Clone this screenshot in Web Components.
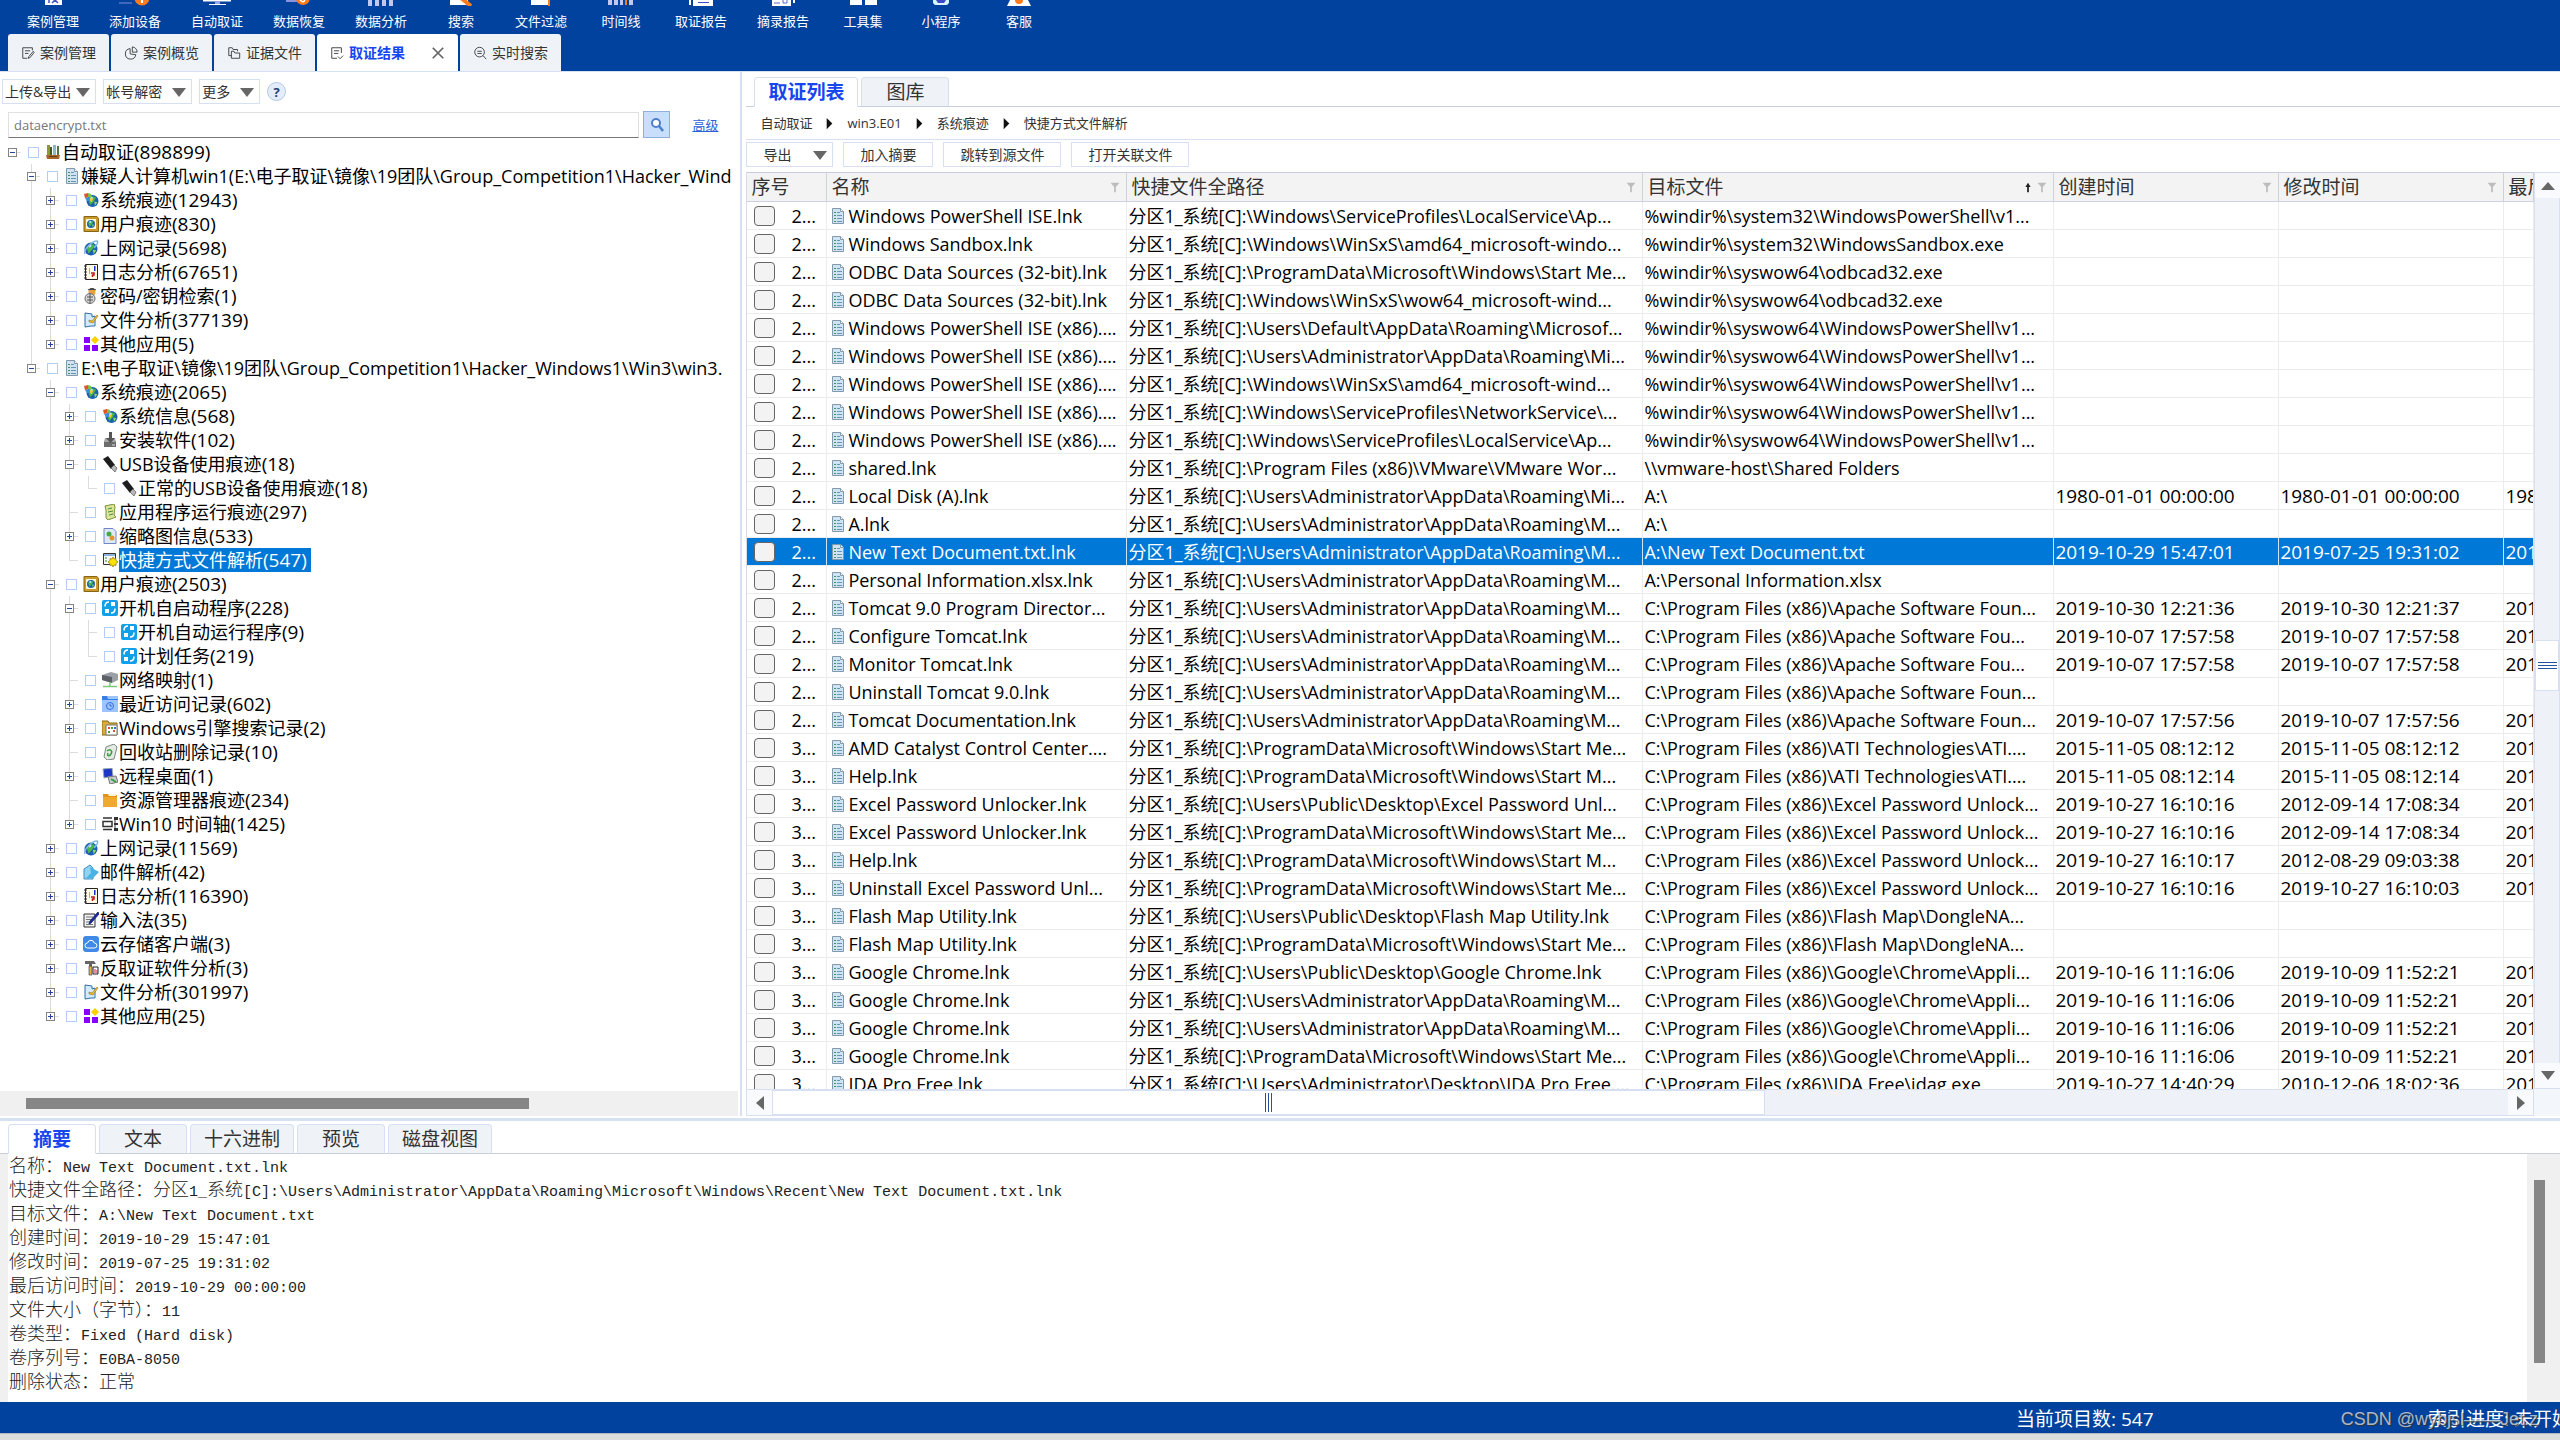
<!DOCTYPE html>
<html lang="zh-CN">
<head>
<meta charset="utf-8">
<title>取证结果</title>
<style>
  html, body { height: 100%; margin: 0; }
  body {
    background: #fff;
    color: #000;
    font-family: "Open Sans", "Noto Sans CJK SC", sans-serif;
    font-size: 14px;
    overflow: hidden;
  }
</style>
</head>
<body>
<forensic-app></forensic-app>

<script>
/**
 * Icon artwork, drawn in a 16x16 box.
 */
const globe = (x, y, r) => `
  <circle cx="${x}" cy="${y}" r="${r}" fill="#1d5fae"/>
  <path d="M${x - r * 0.7} ${y - r * 0.3}l${r * 0.6} ${-r * 0.5}l${r * 0.7} ${r * 0.2}l${-r * 0.4} ${r * 0.7}l${-r * 0.6} ${r * 0.6}z" fill="#49b748"/>
  <path d="M${x + r * 0.3} ${y + r * 0.1}l${r * 0.5} ${r * 0.1}l${-r * 0.4} ${r * 0.6}z" fill="#8be05a"/>
  <circle cx="${x - r * 0.2}" cy="${y - r * 0.5}" r="${r * 0.25}" fill="#bfe6ff"/>`;

const ICONS = {
  case: '<path d="M1 11h14l-1 4H2z" fill="#a8642a"/><path d="M2 1h3v10H2z" fill="#8a9a2c"/><path d="M5 3h2v8H5z" fill="#3f5a28"/><path d="M8 1l3 0 0 10H8z" fill="#8fb6c9"/><path d="M12 2h2v9h-2z" fill="#4d7a3d"/><path d="M4 12h8v1H4z" fill="#6d3b12"/>',
  doc: '<path d="M2.500 .5h8l3 3v12h-11z" fill="#cfe3f3" stroke="#8199ad"/><path d="M10.500 .5v3h3" fill="#fff" stroke="#8199ad"/><path d="M4 4.500h2M4 7.500h2M4 10.500h2M4 13.500h2" stroke="#3a9a5a"/><path d="M7 4.500h3M7 7.500h5M7 10.500h5M7 13.500h5" stroke="#6c93b8"/>',
  sys: globe(9.5, 9, 6) + '<path d="M1 2l4-1 1 4-4 1z" fill="#e8502c"/><path d="M5 1l3 1 0 4-3-1z" fill="#7cc242"/><path d="M2 6l4-1 2 4-4 0z" fill="#3c8ee0"/><path d="M7 6l3 1-1 3-2-1z" fill="#f7c62e"/>',
  user: '<path d="M1 .5h13l1.500 2v13H1z" fill="#c99a2c" stroke="#8a6410"/><path d="M3 3h10v10H3z" fill="#fff8d8"/>' + globe(8, 8, 4),
  globe: globe(8, 9, 6.5) + '<path d="M2 14C0 10 9 1 14 1c2 1-1 5-3 7" fill="none" stroke="#7fb9e8" stroke-width="1.500"/>',
  log: '<path d="M2.500 .5h12v15h-12z" fill="#fffbe6" stroke="#222"/><path d="M1 2h3M1 5h3M1 8h3M1 11h3M1 14h3" stroke="#333"/><path d="M6 4h1v6H6z" fill="#d8b400"/><path d="M11 2h1.500v5H11z" fill="#1430d0"/><path d="M8 9h3v2H9.500v2" fill="none" stroke="#c01818" stroke-width="1.500"/>',
  key: '<circle cx="9" cy="4" r="3.500" fill="#e8a13c"/><path d="M5 2l4-2 4 2" fill="#444" stroke="#444"/><circle cx="7" cy="10.500" r="5" fill="#d8d8d8" stroke="#666"/><path d="M4 9h6M4 12h6M7 6v9" stroke="#555"/>',
  file: '<path d="M2 1l7 1v3l3-1v10H8l-6 1z" fill="#d4ebfb" stroke="#2f6ea8"/><path d="M6 8l3 1 5-6 1 1-5 7-4-1z" fill="#f1c232" stroke="#7c5a10" stroke-width=".5"/>',
  apps: '<path d="M1 1h6v6H1zM1 9h6v6H1zM9 9h6v6H9z" fill="#8a00ff"/><path d="M12 0l4 4-4 4-4-4z" fill="#ffd000"/>',
  install: '<path d="M2 9h12v6H2z" fill="#6d6d6d"/><path d="M3 6h10l1 4H2z" fill="#a6a6a6"/><path d="M7 0h3v6h3l-4.500 5L4 6h3z" fill="#555"/><path d="M10 13h3" stroke="#ddd"/>',
  usb: '<path d="M1 3l5-3 7 9-4 4z" fill="#1e1e1e"/><path d="M9 12l3-3 3 3-2 4z" fill="#b9b9b9" stroke="#555" stroke-width=".7"/>',
  paper: '<path d="M3 2l9-2 1 3-1 8 2 2-8 3-2-2V6z" fill="#d9e59a" stroke="#7f9038"/><path d="M6 5l4-1M6 8l5-1M7 11l4-1" stroke="#4f8a3a"/>',
  thumb: '<path d="M2 .5h9l3 3v12H2z" fill="#dfe9fb" stroke="#6f86c0"/><circle cx="7" cy="6" r="2.500" fill="#45a845"/><circle cx="10" cy="10" r="2.500" fill="#e0962c"/>',
  link: '<path d="M1.500 1.500h12v11h-12z" fill="#f7f7f7" stroke="#333"/><path d="M2 2h11v2H2z" fill="#8fb4d9"/><path d="M3 6h2M3 9h2" stroke="#2c8c3c"/><path d="M11 5l1 2 2-.5v2l2 1.500-2 1.500v2l-2-.5-1 2-1-2-2 .5v-2L6 10l2-1.500v-2l2 .5z" fill="#ffe100" stroke="#8a7a00" stroke-width=".7"/>',
  start: '<rect width="16" height="16" rx="2" fill="#14a0e8"/><path d="M9 2h4v4H9zM3 9h4v4H3z" fill="#fff"/><path d="M7 2C4 2 3 4 3 6.500M9 13c3 0 4-2 4-4.500" fill="none" stroke="#fff" stroke-width="1.500"/>',
  net: '<path d="M0 3l9-3 7 2v6l-6 3-10-3z" fill="#9aa0a6"/><path d="M0 3l10 2v6L0 8z" fill="#5c6168"/><path d="M8 10v4M1 14.500h14" stroke="#7dc87d" stroke-width="1.500"/>',
  recent: '<path d="M0 0h16v16H0z" fill="#9dc4ff"/><path d="M0 0h5l1 3h10v1H0z" fill="#3a7de8"/><circle cx="8" cy="10" r="3.500" fill="none" stroke="#2f6fe0"/><path d="M8 8v2h2" fill="none" stroke="#2f6fe0"/>',
  winsearch: '<path d="M0 1h6l1 2h8v12H0z" fill="#d8ad3c" stroke="#8a6a18"/><path d="M4 5h11v10H4z" fill="#fff" stroke="#777"/><path d="M6 7h2v2H6zM11 10h2v2h-2z" fill="#e0502c"/><path d="M9 7h2v2H9zM6 11h2v2H6z" fill="#4a9a3a"/><path d="M12 7h2v2h-2z" fill="#2c6ee0"/>',
  bin: '<path d="M4 3l8-3 3 3-3 12-7 1-3-3z" fill="#e3ebe3" stroke="#7c8a80"/><path d="M5 7c3-3 6 0 4 3s-4 2-3-1" fill="none" stroke="#3f9e46" stroke-width="1.500"/>',
  remote: '<path d="M1 1l9-1 1 8-9 2z" fill="#1c36c8" stroke="#9aa"/><path d="M6 9l8-1 2 6-8 2z" fill="#c6cbd2" stroke="#777"/><path d="M9 11l5 3" stroke="#3aa03a" stroke-width="2"/>',
  folder: '<path d="M1 2h5l1 1h8v12H1z" fill="#e0951a"/><path d="M1 5h14v10H1z" fill="#efa92e"/><path d="M6 2h8v2H7z" fill="#fff3d0"/>',
  timeline: '<path d="M1 2h9M1 13.500h9M1 5.500h9v5H1z" fill="none" stroke="#333" stroke-width="1.500"/><path d="M13 1v14" stroke="#333"/><path d="M12 1h4v3h-4zM12 7h4v2h-4zM12 12h4v3h-4z" fill="#333"/>',
  mail: '<path d="M1 5l6-4 3 3v11H1z" fill="#8fd4f4" stroke="#3a8fc0"/><path d="M7 3l9 5-6 6H3l5-5z" fill="#49b3e6"/>',
  ime: '<path d="M1 2h11v13H1z" fill="#f0f0f0" stroke="#333"/><path d="M3 5h7M3 7.500h6M3 10h4M3 12.500h7" stroke="#777"/><path d="M15 0l1 2-8 9-2 1 1-3z" fill="#1c2c8c" stroke="#1c2c8c"/>',
  cloud: '<rect width="16" height="16" rx="3" fill="#3f8ae6"/><path d="M4.500 12a2.500 2.500 0 0 1 0-5 3.500 3.500 0 0 1 6.800 0 2.500 2.500 0 0 1 .2 5z" fill="none" stroke="#fff"/>',
  tool: '<path d="M2 1h9l2 3H9v2H6V4H2z" fill="#666"/><path d="M6 6h3v9H6z" fill="#e0b040" stroke="#333" stroke-width=".6"/><path d="M10 7h5v7h-5z" fill="#fff" stroke="#222"/><path d="M12 9v4M14 10v3" stroke="#c81840"/>',

  edit: '<path d="M13 5V2H2v12h5M4.500 5.500h6M4.500 8.500h4M14 6l-5 6-1 2 2-.5 5-6z" fill="none" stroke="#333"/>',
  pie: '<path d="M7 3a6 6 0 1 0 6.500 7L7 9zM9.500 1v6H15A6 6 0 0 0 9.500 1z" fill="none" stroke="#333"/>',
  copy: '<path d="M5 11H2V2h4l1 2h5v2M5 6h3l1 2h5.500v6H5z" fill="none" stroke="#333"/>',
  check: '<path d="M13 8V2H2v12h6M4.500 5.500h6M4.500 8.500h5M9 12l2.500 2.500L15 11" fill="none" stroke="#333"/>',
  find: '<circle cx="7.500" cy="7" r="5.500" fill="none" stroke="#333"/><path d="M5 6h5M5 8.500h5M11.500 11l3.500 4" stroke="#333" fill="none"/>',
  glass: '<circle cx="7" cy="6" r="4" fill="#fff" stroke="#4f7fc8" stroke-width="2"/><path d="M10 9l4 5" stroke="#4f7fc8" stroke-width="2.500"/>',
  close: '<path d="M2 2l12 12M14 2l-12 12" stroke="#666" stroke-width="2"/>',
  down: '<path d="M1 4h14l-7 9z" fill="#666"/>',
  up: '<path d="M1 12h14L8 4z" fill="#666"/>',
  left: '<path d="M12 1v14L4 8z" fill="#666"/>',
  right: '<path d="M4 1v14l8-7z" fill="#666"/>',
  crumb: '<path d="M5 2v12l6-6z" fill="#111"/>',
  filter: '<path d="M3 3h10l-4 5v6H7V8z" fill="#bdbdbd"/>',
  sort: '<path d="M8 3l3 5H9v6H7V8H5z" fill="#222"/>'
};

/* Lower edges of the ribbon pictures, 32x6 */
const RIBBON_ART = {
  case: '<path d="M0 0h17v5H0z" fill="#fff" transform="translate(8)"/><path d="M12 0v3M15 3l3-3 3 3" stroke="#3d4fc4" stroke-width="1.500" fill="none"/>',
  add: '<path d="M0 3h13" stroke="#7f8fd8"/><circle cx="23" cy="-2" r="7.500" fill="#ff7a1a"/><path d="M23 0v3" stroke="#fff" stroke-width="2"/>',
  auto: '<path d="M2 0h28v1.500H2z" fill="#fff"/><path d="M8 4.500h17" stroke="#fff"/><path d="M14 1h5v3h-5z" fill="#9aa6e8"/>',
  restore: '<path d="M3 0h12v2H3z" fill="#8a95dc"/><circle cx="20" cy="-2" r="7" fill="#ff7a1a"/><path d="M17 0q4 4 5-1" fill="none" stroke="#fff" stroke-width="1.500"/>',
  chart: '<path d="M3 0h4v6H3zM10 0h4v6h-4zM17 0h4v6h-4zM24 0h4v6h-4z" fill="#c3c7ef"/>',
  search: '<path d="M5 0h18v5H5z" fill="#fff"/><path d="M16-2l10 8" stroke="#ff7a1a" stroke-width="4"/>',
  filter: '<path d="M6 0h18v5H6z" fill="#fff"/><path d="M23 0h2v6h-2z" fill="#ff7a1a"/>',
  time: '<path d="M3 0h4v5H3zM9 0h4v5H9zM15 0h3v5h-3zM24 0h4v5h-4z" fill="#c3c7ef"/><path d="M20 0h2v5h-2z" fill="#ff7a1a"/>',
  report: '<path d="M4 0h2v5H4zM8 0h20v6H8z" fill="#fff"/><path d="M13 2.500h11" stroke="#3d4fc4"/>',
  excerpt: '<path d="M5 0h19v6H5z" fill="#fff"/><path d="M7 3h6M16 0v3h4V0" stroke="#5a68cc" fill="none"/><path d="M27 0v3" stroke="#fff" stroke-width="2"/>',
  tools: '<path d="M3 0h12v5H3zM18 0h12v5H18z" fill="#fff"/>',
  mini: '<path d="M8 0h16v3l-2 2H10l-2-2z" fill="#d6f3ff"/><path d="M11 0h10l-2 3h-6z" fill="#3b48c8"/>',
  service: '<path d="M7 0h18l3 6H4z" fill="#fff"/><circle cx="16" cy="0" r="4" fill="#ff7a1a"/>'
};

/** Base class: opens a shadow root and fills it once connected */
class BaseElement extends HTMLElement {
  constructor() {
    super();
    this.attachShadow({ mode: 'open' });
  }

  connectedCallback() {
    this.shadowRoot.innerHTML = `<style>* { box-sizing: border-box; } ${this.styles()}</style>${this.markup()}`;
  }
}

/** <ui-icon name="doc"></ui-icon> */
class UiIcon extends BaseElement {
  styles() {
    return ':host { display: block; flex: none; width: 16px; height: 16px; } svg { display: block; width: 100%; height: 100%; }';
  }

  markup() {
    return `<svg viewBox="0 0 16 16" aria-hidden="true">${ICONS[this.getAttribute('name')] || ''}</svg>`;
  }
}

/** Top ribbon with the large tool buttons */
class AppRibbon extends BaseElement {
  styles() {
    return `
      :host { display: block; }
      nav { display: flex; gap: 30px; padding: 0 27px 4px; }
      button {
        display: flex; flex-direction: column; align-items: center; gap: 6px;
        min-width: 48px; padding: 0; border: 0; background: none;
        color: #fff; font: 13px/18px "Open Sans", "Noto Sans CJK SC", sans-serif; white-space: nowrap;
      }
      svg { display: block; width: 32px; height: 6px; overflow: hidden; }`;
  }

  markup() {
    const items = [
      ['case', '案例管理'], ['add', '添加设备'], ['auto', '自动取证'], ['restore', '数据恢复'],
      ['chart', '数据分析'], ['search', '搜索'], ['filter', '文件过滤'], ['time', '时间线'],
      ['report', '取证报告'], ['excerpt', '摘录报告'], ['tools', '工具集'], ['mini', '小程序'], ['service', '客服']
    ];
    return `<nav>${items.map(([art, text]) => `
      <button><svg viewBox="0 0 32 6" aria-hidden="true">${RIBBON_ART[art]}</svg>${text}</button>`).join('')}</nav>`;
  }
}

/** One document tab; the label is slotted */
class DocTab extends BaseElement {
  styles() {
    return `
      :host { display: block; }
      .tab {
        display: flex; align-items: center; height: 37px; padding: 0 13px;
        background: #eff3f8; border-radius: 3px 3px 0 0;
      }
      button {
        display: flex; align-items: center; gap: 5px; padding: 0; border: 0; background: none;
        color: #333; font: 14px/20px "Open Sans", "Noto Sans CJK SC", sans-serif;
      }
      button ui-icon { width: 14px; height: 14px; }
      .close { margin-left: 26px; }
      :host([active]) .tab { background: #fff; }
      :host([active]) .label { color: #1745ee; font-weight: 700; }`;
  }

  markup() {
    const close = this.hasAttribute('active')
      ? '<button class="close" aria-label="关闭"><ui-icon name="close"></ui-icon></button>' : '';
    return `<div class="tab"><button class="label"><ui-icon name="${this.getAttribute('icon')}"></ui-icon><slot></slot></button>${close}</div>`;
  }
}

/** Row of page tabs with a rule beneath, used over the list and the details */
class PageTabs extends BaseElement {
  styles() {
    return `
      :host { display: block; }
      div { display: flex; gap: 3px; padding: 0 8px; border-bottom: 1px solid #c9cede; }
      button {
        height: 30px; min-width: 88px; margin-bottom: -1px; padding: 0 13px;
        border: 1px solid #d6e0f2; border-bottom-color: #c9cede; border-radius: 4px 4px 0 0;
        background: #eff3f8; color: #333;
        font: 19px/26px "Open Sans", "Noto Sans CJK SC", sans-serif;
      }
      button[aria-selected="true"] { background: #fff; border-bottom-color: #fff; color: #1745ee; font-weight: 700; }`;
  }

  markup() {
    return `<div role="tablist">${this.getAttribute('items').split(',').map((t, i) =>
      `<button role="tab" aria-selected="${i === 0}">${t}</button>`).join('')}</div>`;
  }
}

/** Bordered tool button, with an optional drop arrow */
class ToolButton extends BaseElement {
  styles() {
    return `
      :host { display: block; }
      button {
        display: flex; align-items: center; justify-content: space-between; width: 100%; height: 25px;
        padding: 0 var(--pad, 15px); border: 1px solid #d6e0f2; background: #fff;
        color: #333; font: 14px/20px "Open Sans", "Noto Sans CJK SC", sans-serif; white-space: nowrap;
      }
      ui-icon { margin-left: var(--arrow-gap, 4px); }
      :host([menu]) button { padding-right: 4px; }`;
  }

  markup() {
    return `<button><slot></slot>${this.hasAttribute('menu') ? '<ui-icon name="down"></ui-icon>' : ''}</button>`;
  }
}

/* level, expander (+, - or none), icon, label, count, selected */
const TREE = [
  [0, '-', 'case', '自动取证', 898899],
  [1, '-', 'doc', '嫌疑人计算机win1(E:\\电子取证\\镜像\\19团队\\Group_Competition1\\Hacker_Wind'],
  [2, '+', 'sys', '系统痕迹', 12943],
  [2, '+', 'user', '用户痕迹', 830],
  [2, '+', 'globe', '上网记录', 5698],
  [2, '+', 'log', '日志分析', 67651],
  [2, '+', 'key', '密码/密钥检索', 1],
  [2, '+', 'file', '文件分析', 377139],
  [2, '+', 'apps', '其他应用', 5],
  [1, '-', 'doc', 'E:\\电子取证\\镜像\\19团队\\Group_Competition1\\Hacker_Windows1\\Win3\\win3.'],
  [2, '-', 'sys', '系统痕迹', 2065],
  [3, '+', 'sys', '系统信息', 568],
  [3, '+', 'install', '安装软件', 102],
  [3, '-', 'usb', 'USB设备使用痕迹', 18],
  [4, '', 'usb', '正常的USB设备使用痕迹', 18],
  [3, '', 'paper', '应用程序运行痕迹', 297],
  [3, '+', 'thumb', '缩略图信息', 533],
  [3, '', 'link', '快捷方式文件解析', 547, true],
  [2, '-', 'user', '用户痕迹', 2503],
  [3, '-', 'start', '开机自启动程序', 228],
  [4, '', 'start', '开机自动运行程序', 9],
  [4, '', 'start', '计划任务', 219],
  [3, '', 'net', '网络映射', 1],
  [3, '+', 'recent', '最近访问记录', 602],
  [3, '+', 'winsearch', 'Windows引擎搜索记录', 2],
  [3, '', 'bin', '回收站删除记录', 10],
  [3, '+', 'remote', '远程桌面', 1],
  [3, '', 'folder', '资源管理器痕迹', 234],
  [3, '+', 'timeline', 'Win10 时间轴', 1425],
  [2, '+', 'globe', '上网记录', 11569],
  [2, '+', 'mail', '邮件解析', 42],
  [2, '+', 'log', '日志分析', 116390],
  [2, '+', 'ime', '输入法', 35],
  [2, '+', 'cloud', '云存储客户端', 3],
  [2, '+', 'tool', '反取证软件分析', 3],
  [2, '+', 'file', '文件分析', 301997],
  [2, '+', 'apps', '其他应用', 25]
];

class EvidenceTree extends BaseElement {
  styles() {
    return `
      :host { display: block; flex: 1; min-height: 0; overflow: hidden; }
      ul { margin: 0; padding: 0 0 0 3px; list-style: none; }
      li { display: flex; align-items: center; height: 24px; white-space: nowrap; }
      .guide { display: flex; flex: none; align-items: center; justify-content: center; width: 19px; height: 24px; }
      .line { background: linear-gradient(#dcdcdc, #dcdcdc) 9px 0 / 1px 100% no-repeat; }
      .tee { background:
        linear-gradient(#dcdcdc, #dcdcdc) 9px 0 / 1px 100% no-repeat,
        linear-gradient(#dcdcdc, #dcdcdc) 9px 12px / 9px 1px no-repeat; }
      .end { background:
        linear-gradient(#dcdcdc, #dcdcdc) 9px 0 / 1px 12px no-repeat,
        linear-gradient(#dcdcdc, #dcdcdc) 9px 12px / 9px 1px no-repeat; }
      .root { background: linear-gradient(#dcdcdc, #dcdcdc) 9px 12px / 9px 1px no-repeat; }
      .guide button { display: block; width: 9px; height: 9px; padding: 0; border: 1px solid #848484; background: #fff; }
      .guide svg { display: block; width: 7px; height: 7px; }
      input {
        appearance: none; flex: none; width: 11px; height: 11px; margin: 0 6px;
        border: 1px solid #b4ccf8; background: #fff;
      }
      label { display: flex; align-items: center; gap: 1px; font-size: 18px; line-height: 24px; }
      .count { font-size: 19px; }
      .selected .text { background: #0078d7; color: #fff; padding-right: 4px; }`;
  }

  /** True when the branch at the given level goes on below row i */
  continues(i, level) {
    for (let j = i + 1; j < TREE.length; j++) {
      if (TREE[j][0] < level) return false;
      if (TREE[j][0] === level) return true;
    }
    return false;
  }

  markup() {
    const rows = TREE.map(([level, toggle, icon, text, count, selected], i) => {
      let guides = '';
      for (let l = 0; l < level; l++) {
        guides += `<span class="guide ${l > 0 && this.continues(i, l) ? 'line' : ''}"></span>`;
      }
      const kind = level === 0 ? 'root' : this.continues(i, level) ? 'tee' : 'end';
      const button = toggle ? `<button aria-label="${toggle === '+' ? '展开' : '折叠'}"><svg viewBox="0 0 7 7">
        <path d="M1 3.500h5${toggle === '+' ? 'M3.500 1v5' : ''}" stroke="#24479c"/></svg></button>` : '';
      return `<li role="treeitem" class="${selected ? 'selected' : ''}">${guides}<span class="guide ${kind}">${button}</span>
        <input type="checkbox" id="n${i}"><label for="n${i}"><ui-icon name="${icon}"></ui-icon><span class="text">${text}${
          count ? `<span class="count">(${count})</span>` : ''}</span></label></li>`;
    });
    return `<ul role="tree">${rows.join('')}</ul>`;
  }
}

/**
 * Plain grey scrollbar.
 * The track attribute holds the shares before, in and after the thumb.
 */
class FlatScroll extends BaseElement {
  styles() {
    const [a, b, c] = this.getAttribute('track').split(' ');
    return `
      :host { display: flex; flex: none; background: #f0f0f0; }
      :host([vertical]) { flex-direction: column; width: 33px; padding: 0 15px 0 7px; }
      :host(:not([vertical])) { height: 25px; padding: 7px 0; }
      .before { flex: ${a}; } .thumb { flex: ${b}; background: #868686; } .after { flex: ${c}; }`;
  }

  markup() {
    return '<span class="before"></span><span class="thumb"></span><span class="after"></span>';
  }
}

/** Scrollbar of the grid, with arrow buttons and a gripped thumb */
class GridScroll extends BaseElement {
  styles() {
    const [a, b, c] = this.getAttribute('track').split(' ');
    return `
      :host { display: flex; background: #eef1f7; border: 1px solid #d6e0f2; }
      :host([vertical]) { flex-direction: column; width: 26px; }
      :host(:not([vertical])) { height: 27px; }
      button { display: grid; place-items: center; flex: none; width: 25px; height: 25px; padding: 0; border: 0; background: #f8fafd; }
      .before { flex: ${a}; } .after { flex: ${c}; }
      .thumb { display: grid; place-items: center; flex: ${b}; background: #fff; border: 1px solid #d6e0f2; }
      .grip { width: 7px; height: 19px; border: solid #24529c; border-width: 0 1px; background: linear-gradient(#24529c, #24529c) 2px 0 / 1px 100% no-repeat; }
      :host([vertical]) .grip { width: 19px; height: 7px; border-width: 1px 0; background: linear-gradient(#24529c, #24529c) 0 2px / 100% 1px no-repeat; }`;
  }

  markup() {
    const v = this.hasAttribute('vertical');
    return `<button aria-label="向前"><ui-icon name="${v ? 'up' : 'left'}"></ui-icon></button>
      <span class="before"></span><span class="thumb"><span class="grip"></span></span><span class="after"></span>
      <button aria-label="向后"><ui-icon name="${v ? 'down' : 'right'}"></ui-icon></button>`;
  }
}

const C = '分区1_系统[C]:';
const ROAM = C + '\\Users\\Administrator\\AppData\\Roaming\\M...';
const ROAM_I = C + '\\Users\\Administrator\\AppData\\Roaming\\Mi...';
const START = C + '\\ProgramData\\Microsoft\\Windows\\Start Me...';
const START_M = C + '\\ProgramData\\Microsoft\\Windows\\Start M...';
const PF = 'C:\\Program Files (x86)\\';
const WOW = '%windir%\\syswow64\\';

/* no, name, shortcut path, target, created, modified, accessed */
const ROWS = [
  [2, 'Windows PowerShell ISE.lnk', C + '\\Windows\\ServiceProfiles\\LocalService\\Ap...', '%windir%\\system32\\WindowsPowerShell\\v1...'],
  [2, 'Windows Sandbox.lnk', C + '\\Windows\\WinSxS\\amd64_microsoft-windo...', '%windir%\\system32\\WindowsSandbox.exe'],
  [2, 'ODBC Data Sources (32-bit).lnk', START, WOW + 'odbcad32.exe'],
  [2, 'ODBC Data Sources (32-bit).lnk', C + '\\Windows\\WinSxS\\wow64_microsoft-wind...', WOW + 'odbcad32.exe'],
  [2, 'Windows PowerShell ISE (x86)....', C + '\\Users\\Default\\AppData\\Roaming\\Microsof...', WOW + 'WindowsPowerShell\\v1...'],
  [2, 'Windows PowerShell ISE (x86)....', ROAM_I, WOW + 'WindowsPowerShell\\v1...'],
  [2, 'Windows PowerShell ISE (x86)....', C + '\\Windows\\WinSxS\\amd64_microsoft-wind...', WOW + 'WindowsPowerShell\\v1...'],
  [2, 'Windows PowerShell ISE (x86)....', C + '\\Windows\\ServiceProfiles\\NetworkService\\...', WOW + 'WindowsPowerShell\\v1...'],
  [2, 'Windows PowerShell ISE (x86)....', C + '\\Windows\\ServiceProfiles\\LocalService\\Ap...', WOW + 'WindowsPowerShell\\v1...'],
  [2, 'shared.lnk', C + '\\Program Files (x86)\\VMware\\VMware Wor...', '\\\\vmware-host\\Shared Folders'],
  [2, 'Local Disk (A).lnk', ROAM_I, 'A:\\', '1980-01-01 00:00:00', '1980-01-01 00:00:00', '1980-01-01'],
  [2, 'A.lnk', ROAM, 'A:\\'],
  [2, 'New Text Document.txt.lnk', ROAM, 'A:\\New Text Document.txt', '2019-10-29 15:47:01', '2019-07-25 19:31:02', '2019-10-29'],
  [2, 'Personal Information.xlsx.lnk', ROAM, 'A:\\Personal Information.xlsx'],
  [2, 'Tomcat 9.0 Program Director...', ROAM, PF + 'Apache Software Foun...', '2019-10-30 12:21:36', '2019-10-30 12:21:37', '2019-10-30'],
  [2, 'Configure Tomcat.lnk', ROAM, PF + 'Apache Software Fou...', '2019-10-07 17:57:58', '2019-10-07 17:57:58', '2019-10-07'],
  [2, 'Monitor Tomcat.lnk', ROAM, PF + 'Apache Software Fou...', '2019-10-07 17:57:58', '2019-10-07 17:57:58', '2019-10-07'],
  [2, 'Uninstall Tomcat 9.0.lnk', ROAM, PF + 'Apache Software Foun...'],
  [2, 'Tomcat Documentation.lnk', ROAM, PF + 'Apache Software Foun...', '2019-10-07 17:57:56', '2019-10-07 17:57:56', '2019-10-07'],
  [3, 'AMD Catalyst Control Center....', START, PF + 'ATI Technologies\\ATI....', '2015-11-05 08:12:12', '2015-11-05 08:12:12', '2015-11-05'],
  [3, 'Help.lnk', START_M, PF + 'ATI Technologies\\ATI....', '2015-11-05 08:12:14', '2015-11-05 08:12:14', '2015-11-05'],
  [3, 'Excel Password Unlocker.lnk', C + '\\Users\\Public\\Desktop\\Excel Password Unl...', PF + 'Excel Password Unlock...', '2019-10-27 16:10:16', '2012-09-14 17:08:34', '2019-10-27'],
  [3, 'Excel Password Unlocker.lnk', START, PF + 'Excel Password Unlock...', '2019-10-27 16:10:16', '2012-09-14 17:08:34', '2019-10-27'],
  [3, 'Help.lnk', START_M, PF + 'Excel Password Unlock...', '2019-10-27 16:10:17', '2012-08-29 09:03:38', '2019-10-27'],
  [3, 'Uninstall Excel Password Unl...', START, PF + 'Excel Password Unlock...', '2019-10-27 16:10:16', '2019-10-27 16:10:03', '2019-10-27'],
  [3, 'Flash Map Utility.lnk', C + '\\Users\\Public\\Desktop\\Flash Map Utility.lnk', PF + 'Flash Map\\DongleNA...'],
  [3, 'Flash Map Utility.lnk', START, PF + 'Flash Map\\DongleNA...'],
  [3, 'Google Chrome.lnk', C + '\\Users\\Public\\Desktop\\Google Chrome.lnk', PF + 'Google\\Chrome\\Appli...', '2019-10-16 11:16:06', '2019-10-09 11:52:21', '2019-10-16'],
  [3, 'Google Chrome.lnk', ROAM, PF + 'Google\\Chrome\\Appli...', '2019-10-16 11:16:06', '2019-10-09 11:52:21', '2019-10-16'],
  [3, 'Google Chrome.lnk', ROAM, PF + 'Google\\Chrome\\Appli...', '2019-10-16 11:16:06', '2019-10-09 11:52:21', '2019-10-16'],
  [3, 'Google Chrome.lnk', START, PF + 'Google\\Chrome\\Appli...', '2019-10-16 11:16:06', '2019-10-09 11:52:21', '2019-10-16'],
  [3, 'IDA Pro Free.lnk', C + '\\Users\\Administrator\\Desktop\\IDA Pro Free....', PF + 'IDA Free\\idag.exe', '2019-10-27 14:40:29', '2010-12-06 18:02:36', '2019-10-27']
];
const SELECTED_ROW = 12;

class ResultGrid extends BaseElement {
  styles() {
    return `
      :host { display: grid; grid-template: minmax(0, 1fr) auto / minmax(0, 1fr) auto; flex: 1; min-height: 0; }
      .view { overflow: hidden; border-left: 1px solid #d6dbe6; }
      .corner { background: #f3f6fb; }
      table { width: 100%; table-layout: fixed; border-collapse: separate; border-spacing: 0; }
      th, td { padding: 0 0 0 1px; overflow: hidden; border-right: 1px solid #ececec; border-bottom: 1px solid #ececec; text-align: left; white-space: nowrap; }
      th {
        height: 30px; padding: 0 4px; background: #f3f3f3; border-color: #cdd1de; border-top: 1px solid #c9cede;
        color: #333; font-size: 19px; font-weight: 400; line-height: 26px;
      }
      .head { display: flex; align-items: center; }
      .head span { flex: 1; }
      .head ui-icon { width: 14px; height: 14px; }
      td { height: 28px; font-size: 18px; line-height: 24px; }
      .date { font-size: 19px; }
      .cell { display: flex; align-items: center; gap: 2px; }
      .no { padding-left: 7px; }
      .no .cell { gap: 16px; }
      .name { padding-left: 3px; }
      input {
        appearance: none; flex: none; width: 21px; height: 20px; margin: 0;
        border: 1px solid #666; border-radius: 4px; background: #f3f3f3;
      }
      .selected td { background: #0078d7; color: #fff; border-right-color: #cfe4f7; }`;
  }

  markup() {
    const cols = [
      ['序号', 80, ''], ['名称', 300, 'f'], ['快捷文件全路径', 516, 'f'], ['目标文件', 411, 'sf'],
      ['创建时间', 225, 'f'], ['修改时间', 225, 'f'], ['最后访问时间', 0, '']
    ];
    const heads = cols.map(([text, , marks]) => `<th scope="col"><div class="head"><span>${text}</span>${
      marks.includes('s') ? '<ui-icon name="sort"></ui-icon>' : ''}${
      marks.includes('f') ? '<ui-icon name="filter"></ui-icon>' : ''}</div></th>`).join('');
    const rows = ROWS.map(([no, name, path, target, made = '', changed = '', seen = ''], i) => `
      <tr class="${i === SELECTED_ROW ? 'selected' : ''}">
        <td class="no"><div class="cell"><input type="checkbox" id="r${i}"><label for="r${i}">${no}...</label></div></td>
        <td class="name"><div class="cell"><ui-icon name="doc"></ui-icon>${name}</div></td>
        <td>${path}</td><td>${target}</td>
        <td class="date">${made}</td><td class="date">${changed}</td><td class="date">${seen}</td>
      </tr>`).join('');
    return `
      <div class="view"><table>
        <colgroup>${cols.map(c => c[1] ? `<col style="width: ${c[1]}px">` : '<col>').join('')}</colgroup>
        <thead><tr>${heads}</tr></thead><tbody>${rows}</tbody>
      </table></div>
      <grid-scroll vertical track="443 49 372"></grid-scroll>
      <grid-scroll track="0 992 744"></grid-scroll>
      <div class="corner"></div>`;
  }
}

/** Summary of the selected shortcut */
class DetailPane extends BaseElement {
  styles() {
    return `
      :host { display: flex; }
      .text {
        flex: 1; min-width: 0; padding: 0 0 8px 1px; border-left: 8px solid #f0f0f0;
        font-family: "Liberation Mono", "Noto Sans CJK SC", monospace; font-size: 15px;
      }
      p { height: 24px; margin: 0; color: #222; line-height: 21px; white-space: pre; }
      .cn { font-family: "Noto Sans CJK SC", sans-serif; font-size: 18px; font-weight: 300; }`;
  }

  markup() {
    const lines = [
      '名称：New Text Document.txt.lnk',
      '快捷文件全路径：分区1_系统[C]:\\Users\\Administrator\\AppData\\Roaming\\Microsoft\\Windows\\Recent\\New Text Document.txt.lnk',
      '目标文件：A:\\New Text Document.txt',
      '创建时间：2019-10-29 15:47:01',
      '修改时间：2019-07-25 19:31:02',
      '最后访问时间：2019-10-29 00:00:00',
      '文件大小（字节）：11',
      '卷类型：Fixed (Hard disk)',
      '卷序列号：E0BA-8050',
      '删除状态：正常'
    ];
    // Han runs are set larger so that one of them spans two Latin cells
    const mark = line => line.replace(/[^\x00-\x7f]+/g, run => `<span class="cn">${run}</span>`);
    return `<div class="text">${lines.map(l => `<p>${mark(l)}</p>`).join('')}</div>
      <flat-scroll vertical track="26 183 39"></flat-scroll>`;
  }
}

class StatusBar extends BaseElement {
  styles() {
    return `
      :host { display: block; background: #dcdedd; padding-bottom: 6px; }
      div {
        position: relative; display: grid; grid-template-columns: minmax(0, 1fr) 412px 132px;
        height: 32px; border-bottom: 1px solid #b4b8bd; background: #00429e;
        color: #fff; font-size: 19px; line-height: 34px; white-space: nowrap; overflow: hidden;
      }
      span { overflow: hidden; }
      .count { grid-column: 2; }
      .mark {
        position: absolute; right: 22px; top: 0; color: rgba(255, 255, 255, .65);
        font-family: "Liberation Sans", "Noto Sans CJK SC", sans-serif; font-size: 18px; text-shadow: 1px 1px 1px #333;
      }`;
  }

  markup() {
    return `<div><span class="count">当前项目数: 547</span><span>索引进度: 未开始</span>
      <span class="mark">CSDN @wybjsl——Jet.z</span></div>`;
  }
}

class ForensicApp extends BaseElement {
  styles() {
    return `
      :host { display: flex; flex-direction: column; height: 100vh; }
      header { background: #00429e; border-bottom: 1px solid #d6e0f2; }
      .docs { display: flex; gap: 2px; padding: 0 8px; }
      main { display: flex; flex: 1; min-height: 0; border-bottom: 3px solid #d6e2f1; padding-bottom: 2px; }
      .left { display: flex; flex-direction: column; width: 29%; padding-top: 7px; border-right: 2px solid #d6e0f2; }
      .left flat-scroll { margin-right: 2px; }
      .tools { display: flex; align-items: center; gap: 7px; padding: 0 2px; --pad: 2px; }
      .help {
        width: 19px; height: 19px; padding: 0; border: 1px solid #b6c8e2; border-radius: 50%;
        background: #e3edfa; color: #1d3c78; font: 700 13px/16px "Open Sans", sans-serif;
      }
      .search { display: flex; align-items: center; padding: 7px 22px 2px 8px; }
      .search input {
        flex: 1; min-width: 0; height: 26px; padding: 0 5px; border: 1px solid #e0e0e0; border-bottom: 1px solid #777;
        font: 13px/20px "Open Sans", sans-serif;
      }
      .search input::placeholder { color: #777; opacity: 1; }
      .search button {
        display: grid; place-items: center; width: 27px; height: 27px; margin: 0 22px 0 4px; padding: 0;
        border: 1px solid #8fb0dc; background: #c9defa;
      }
      a { color: #2b62d9; font-size: 13px; line-height: 20px; }
      .right { display: flex; flex: 1; flex-direction: column; min-width: 0; padding: 5px 0 0 4px; }
      .crumbs { display: flex; align-items: center; gap: 10px; padding: 6px 14px; border-bottom: 1px solid #d6e0f2; color: #333; font-size: 13px; line-height: 20px; }
      .crumbs ui-icon { width: 15px; height: 15px; }
      .actions { display: flex; gap: 10px; padding: 2px 0 5px; --pad: 16px; --arrow-gap: 21px; }
      footer page-tabs { padding-top: 3px; }`;
  }

  markup() {
    return `
      <header>
        <app-ribbon></app-ribbon>
        <div class="docs">
          <doc-tab icon="edit">案例管理</doc-tab>
          <doc-tab icon="pie">案例概览</doc-tab>
          <doc-tab icon="copy">证据文件</doc-tab>
          <doc-tab icon="check" active>取证结果</doc-tab>
          <doc-tab icon="find">实时搜索</doc-tab>
        </div>
      </header>
      <main>
        <section class="left">
          <div class="tools">
            <tool-button menu>上传&amp;导出</tool-button>
            <tool-button menu style="--arrow-gap: 9px">帐号解密</tool-button>
            <tool-button menu style="--arrow-gap: 9px">更多</tool-button>
            <button class="help" aria-label="帮助">?</button>
          </div>
          <div class="search">
            <input type="text" placeholder="dataencrypt.txt" aria-label="搜索">
            <button aria-label="搜索"><ui-icon name="glass"></ui-icon></button>
            <a href="#">高级</a>
          </div>
          <evidence-tree></evidence-tree>
          <flat-scroll track="26 504 210"></flat-scroll>
        </section>
        <section class="right">
          <page-tabs items="取证列表,图库"></page-tabs>
          <div class="crumbs">
            <span>自动取证</span><ui-icon name="crumb"></ui-icon>
            <span>win3.E01</span><ui-icon name="crumb"></ui-icon>
            <span>系统痕迹</span><ui-icon name="crumb"></ui-icon>
            <span>快捷方式文件解析</span>
          </div>
          <div class="actions">
            <tool-button menu>导出</tool-button>
            <tool-button>加入摘要</tool-button>
            <tool-button>跳转到源文件</tool-button>
            <tool-button>打开关联文件</tool-button>
          </div>
          <result-grid></result-grid>
        </section>
      </main>
      <footer>
        <page-tabs items="摘要,文本,十六进制,预览,磁盘视图"></page-tabs>
        <detail-pane></detail-pane>
        <status-bar></status-bar>
      </footer>`;
  }
}

customElements.define('ui-icon', UiIcon);
customElements.define('app-ribbon', AppRibbon);
customElements.define('doc-tab', DocTab);
customElements.define('page-tabs', PageTabs);
customElements.define('tool-button', ToolButton);
customElements.define('evidence-tree', EvidenceTree);
customElements.define('flat-scroll', FlatScroll);
customElements.define('grid-scroll', GridScroll);
customElements.define('result-grid', ResultGrid);
customElements.define('detail-pane', DetailPane);
customElements.define('status-bar', StatusBar);
customElements.define('forensic-app', ForensicApp);
</script>
</body>
</html>
